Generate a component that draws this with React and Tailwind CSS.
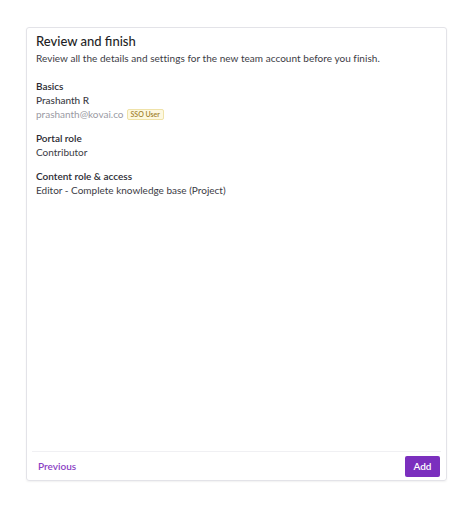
import React from "react";

const Field = ({ label, children }) => (
  <div className="flex flex-col">
    <span className="text-[10px] leading-[14px] font-semibold text-[#2b2b33]">{label}</span>
    {children}
  </div>
);

export default function App() {
  return (
    <div
      className="w-[474px] h-[508px] bg-white pt-[27px] pl-[26px]"
      style={{ fontFamily: "Lato, 'Noto Sans', sans-serif" }}
    >
      <div className="w-[421px] h-[454px] border border-[#e3e3e8] rounded-[3px] shadow-[0_1px_2px_rgba(0,0,0,0.06)] flex flex-col">
        <div className="flex-1 px-[9px] pt-[5px] flex flex-col">
          <h1 className="text-[13px] leading-[16px] font-medium text-[#1f1f26]">Review and finish</h1>
          <p className="mt-[2px] text-[10px] leading-[14px] text-[#3b3b44] tracking-[0.04px]">
            Review all the details and settings for the new team account before you finish.
          </p>

          <div className="mt-[14px] flex flex-col gap-[10px]">
            <Field label="Basics">
              <span className="text-[10px] leading-[14px] font-medium text-[#3b3b44]">Prashanth R</span>
              <div className="flex items-center gap-[3px] h-[14px]">
                <span className="text-[10px] leading-[14px] text-[#9a9aa3]">prashanth@kovai.co</span>
                <span className="px-[3px] h-[11px] flex items-center text-[7px] font-semibold text-[#a0802a] bg-[#fdf8e0] border border-[#efe2a8] rounded-[2px]">
                  SSO User
                </span>
              </div>
            </Field>
            <Field label="Portal role">
              <span className="text-[10px] leading-[14px] text-[#3b3b44]">Contributor</span>
            </Field>
            <Field label="Content role & access">
              <span className="text-[10px] leading-[14px] text-[#3b3b44]">Editor - Complete knowledge base (Project)</span>
            </Field>
          </div>
        </div>

        <div className="mx-[5px] border-t border-[#f0f0f3] h-[29px] flex items-center justify-between pl-[6px] pr-[1px]">
          <button className="text-[10px] font-semibold text-[#8a3fc4]">Previous</button>
          <button className="h-[21px] w-[35px] bg-[#7b2fbe] text-white text-[10px] font-semibold rounded-[2px]">
            Add
          </button>
        </div>
      </div>
    </div>
  );
}
